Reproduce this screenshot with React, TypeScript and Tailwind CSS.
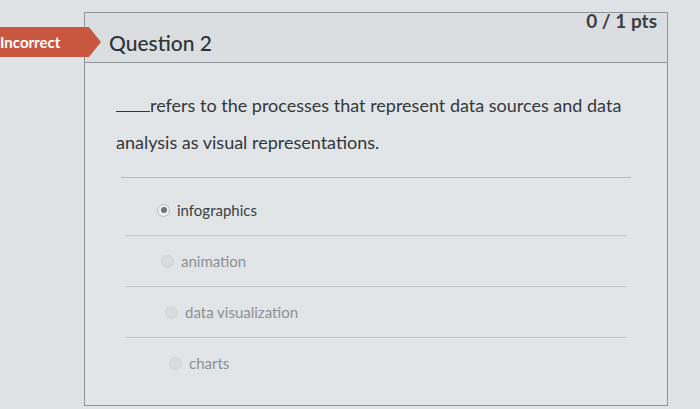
import React from 'react';

const options = [
  { label: 'infographics', selected: true },
  { label: 'animation', selected: false },
  { label: 'data visualization', selected: false },
  { label: 'charts', selected: false },
];

export default function App() {
  return (
    <div
      className="relative h-[409px] w-[700px] overflow-hidden bg-[#dfe3e5] pt-[12px]"
      style={{ fontFamily: 'Lato, "Open Sans", sans-serif' }}
    >
      {/* etiqueta Incorrect */}
      <div className="absolute left-0 top-[27px] z-10 flex h-[30px] w-[101px] items-center bg-[#c9573f] [clip-path:polygon(0_0,88%_0,100%_50%,88%_100%,0_100%)]">
        <span className="text-[15px] font-bold text-white">Incorrect</span>
      </div>

      <div className="ml-[84px] h-[394px] w-[584px] border border-[#8f9599] bg-[#e2e5e7]">
        {/* cabecalho */}
        <div className="flex h-[50px] items-start justify-between border-b border-[#8f9599] bg-[#dadee0] pl-[24px] pr-[10px]">
          <div className="mt-[17px] text-[21px] font-medium leading-[26px] text-[#2f3438]">Question 2</div>
          <div className="mt-[-4px] text-[19px] font-bold leading-[24px] text-[#3a3f43]">0 / 1 pts</div>
        </div>

        {/* enunciado */}
        <div className="pl-[31px] pr-[26px] pt-[24px] text-[18px] leading-[37px] text-[#33383c]">
          <span className="inline-block w-[34px] border-b border-[#33383c] align-baseline"></span>
          refers to the processes that represent data sources and data analysis as visual representations.
        </div>

        <div className="mx-[36px] mt-[16px] border-b border-[#b5babd]"></div>

        {/* alternativas */}
        <div className="mt-[7px] flex flex-col">
          {options.map((o, i) => (
            <div key={o.label}>
              <div className="flex h-[50px] items-center gap-[7px]" style={{ paddingLeft: 72 + i * 4 }}>
                {o.selected ? (
                  <span className="flex h-[13px] w-[13px] items-center justify-center rounded-full border border-[#b9bec2] bg-[#eceef0]">
                    <span className="h-[6px] w-[6px] rounded-full bg-[#6f7478]"></span>
                  </span>
                ) : (
                  <span className="h-[13px] w-[13px] rounded-full border border-[#d0d4d7] bg-[#d8dcdf]"></span>
                )}
                <span
                  className={
                    o.selected
                      ? 'text-[15px] text-[#3a3f43]'
                      : 'text-[15px] text-[#8c9195]'
                  }
                >
                  {o.label}
                </span>
              </div>
              {i < options.length - 1 && (
                <div className="mx-[40px] border-b border-[#c2c7ca]"></div>
              )}
            </div>
          ))}
        </div>
      </div>
    </div>
  );
}
